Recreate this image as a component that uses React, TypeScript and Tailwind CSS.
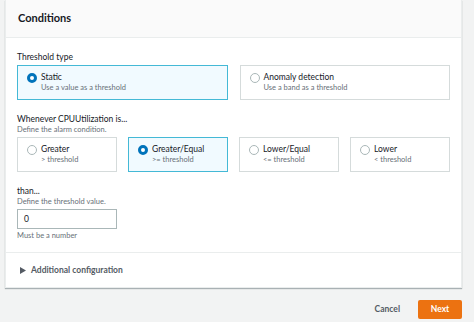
import React from "react";

type Opt = { label: string; desc: string; selected?: boolean };

const typeOptions: Opt[] = [
  { label: "Static", desc: "Use a value as a threshold", selected: true },
  { label: "Anomaly detection", desc: "Use a band as a threshold" },
];

const compareOptions: Opt[] = [
  { label: "Greater", desc: "> threshold" },
  { label: "Greater/Equal", desc: ">= threshold", selected: true },
  { label: "Lower/Equal", desc: "<= threshold" },
  { label: "Lower", desc: "< threshold" },
];

function Radio({ on }: { on?: boolean }) {
  return on ? (
    <span className="mt-[2px] box-border h-[10px] w-[10px] shrink-0 rounded-full border-[3px] border-[#0073bb] bg-white" />
  ) : (
    <span className="mt-[2px] box-border h-[10px] w-[10px] shrink-0 rounded-full border border-[#aab7b8] bg-white" />
  );
}

function Tile({ opt }: { opt: Opt }) {
  return (
    <div
      className={`flex h-[35px] gap-[4px] border pl-[9px] pt-[5px] ${
        opt.selected ? "border-[#44b9d6] bg-[#f1faff]" : "border-[#d5dbdb] bg-white"
      }`}
    >
      <Radio on={opt.selected} />
      <div>
        <div className="text-[8.5px] leading-[12px] text-[#16191f]">{opt.label}</div>
        <div className="text-[7.5px] leading-[10px] text-[#687078]">{opt.desc}</div>
      </div>
    </div>
  );
}

export default function App() {
  return (
    <div
      className="h-[322px] w-[474px] overflow-hidden bg-[#f2f3f3] pl-[5px] pr-[12px]"
      style={{ fontFamily: "Lato, 'Open Sans', sans-serif" }}
    >
      <section className="border border-t-0 border-[#eaeded] bg-white shadow-[0_1px_1px_rgba(0,28,36,0.3)]">
        {/* header */}
        <header className="flex h-[38px] items-center border-b border-[#eaeded] bg-[#fafafa] px-[12px]">
          <h2 className="text-[11px] font-bold text-[#16191f]">Conditions</h2>
        </header>

        <div className="px-[11px] pt-[13px]">
          <div className="text-[8.5px] leading-[12px] text-[#16191f]">Threshold type</div>
          <div className="mt-[2px] grid grid-cols-2 gap-[12px]">
            {typeOptions.map((o) => (
              <Tile key={o.label} opt={o} />
            ))}
          </div>

          <div className="mt-[13px] text-[8.5px] leading-[12px] text-[#16191f]">
            Whenever CPUUtilization is...
          </div>
          <div className="text-[7.5px] leading-[10px] text-[#687078]">Define the alarm condition.</div>
          <div className="mt-[2px] grid grid-cols-4 gap-[11px]">
            {compareOptions.map((o) => (
              <Tile key={o.label} opt={o} />
            ))}
          </div>

          <div className="mt-[13px] text-[8.5px] leading-[12px] text-[#16191f]">than...</div>
          <div className="text-[7.5px] leading-[10px] text-[#687078]">Define the threshold value.</div>
          <div className="mt-[2px] flex h-[20px] w-[100px] items-center border border-[#aab7b8] px-[6px] text-[8.5px] text-[#16191f]">
            0
          </div>
          <div className="mt-[2px] pb-[11px] text-[7.5px] leading-[10px] text-[#687078]">Must be a number</div>
        </div>

        <div className="flex h-[35px] items-center gap-[5px] border-t border-[#eaeded] px-[14px]">
          <svg width="6" height="7" viewBox="0 0 6 7">
            <path d="M0 0 L6 3.5 L0 7 Z" fill="#545b64" />
          </svg>
          <span className="text-[8.5px] font-bold text-[#545b64]">Additional configuration</span>
        </div>
      </section>

      <div className="mt-[12px] flex items-center justify-end gap-[18px]">
        <span className="text-[8.5px] font-bold text-[#545b64]">Cancel</span>
        <button className="h-[19px] w-[44px] rounded-[2px] bg-[#ec7211] text-[8.5px] font-bold text-white">
          Next
        </button>
      </div>
    </div>
  );
}
